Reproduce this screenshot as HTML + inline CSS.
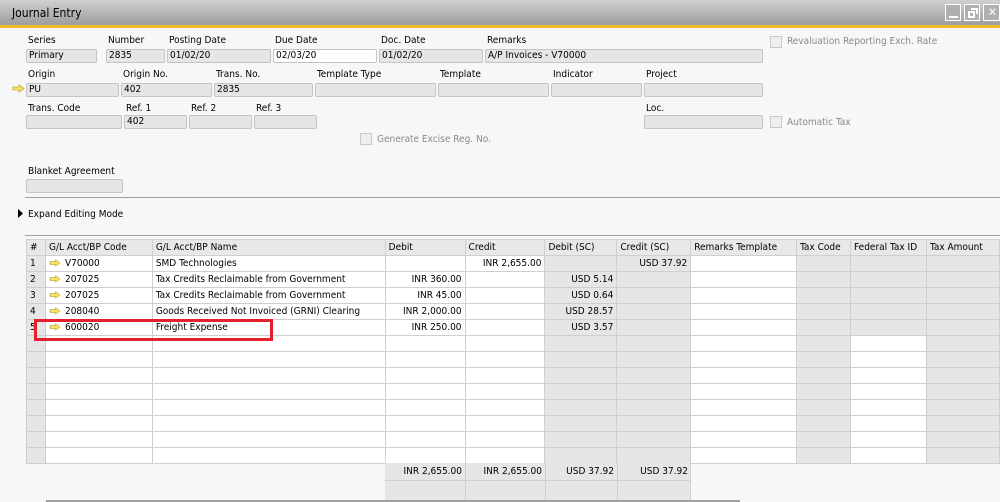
<!DOCTYPE html>
<html><head><style>
*{margin:0;padding:0;box-sizing:border-box}
body{width:1000px;height:502px;overflow:hidden;background:#f7f7f7;font-family:Tahoma,"DejaVu Sans Condensed","Liberation Sans",sans-serif;font-size:10px;color:#000;position:relative}
.a{position:absolute;white-space:nowrap}
.f{position:absolute;height:14px;background:#e6e6e6;border:1px solid #c4c4c4;border-radius:2px;padding-left:2px;line-height:12px;font-size:10px}
.l{position:absolute;font-size:10px;white-space:nowrap}
.cb{position:absolute;width:12px;height:12px;border:1px solid #c8c8c8;background:#eee}
.g{color:#8a8a8a}
table{position:absolute;left:26px;top:239px;border-collapse:collapse;font-size:10px}
td{border:1px solid #cfcfcf;height:16px;padding:0 3px;white-space:nowrap;background:#fff}
td.s{background:#e6e6e6}
td.r{text-align:right}
tr.h td{background:#e8e8e8}
.ar{display:inline-block;width:12px;height:8px;vertical-align:middle;margin-right:4px}
</style></head><body>
<div class="a" style="left:0;top:0;width:1000px;height:25px;background:linear-gradient(#d0d0d0,#9d9d9d)"></div>
<div class="a" style="left:0;top:25px;width:1000px;height:3px;background:#f0b82a"></div>
<div class="a" style="left:12px;top:6px;font-size:12px">Journal Entry</div>
<div class="a" style="left:945px;top:4px;width:16px;height:17px;border:1px solid #fff;background:#b0b0b0"><div style="position:absolute;left:3px;top:11px;width:9px;height:2px;background:#fff"></div></div>
<div class="a" style="left:964px;top:4px;width:16px;height:17px;border:1px solid #fff;background:#b0b0b0"><div style="position:absolute;left:3px;top:6px;width:7px;height:7px;border:2px solid #fff"></div><div style="position:absolute;left:6px;top:3px;width:7px;height:6px;border-top:2px solid #fff;border-right:2px solid #fff"></div></div>
<div class="a" style="left:983px;top:4px;width:17px;height:17px;border:1px solid #fff;background:#b0b0b0;color:#fff;font-weight:bold;font-size:12px;padding-left:4px">✕</div>

<div class="l" style="left:28px;top:35px">Series</div>
<div class="l" style="left:108px;top:35px">Number</div>
<div class="l" style="left:169px;top:35px">Posting Date</div>
<div class="l" style="left:275px;top:35px">Due Date</div>
<div class="l" style="left:381px;top:35px">Doc. Date</div>
<div class="l" style="left:487px;top:35px">Remarks</div>
<div class="f" style="left:26px;top:49px;width:71px">Primary</div>
<div class="f" style="left:106px;top:49px;width:59px">2835</div>
<div class="f" style="left:167px;top:49px;width:104px">01/02/20</div>
<div class="f" style="left:273px;top:49px;width:104px;background:#fff">02/03/20</div>
<div class="f" style="left:379px;top:49px;width:104px">01/02/20</div>
<div class="f" style="left:485px;top:49px;width:278px">A/P Invoices - V70000</div>
<div class="cb" style="left:770px;top:36px"></div>
<div class="l g" style="left:787px;top:36px">Revaluation Reporting Exch. Rate</div>

<div class="l" style="left:28px;top:69px">Origin</div>
<div class="l" style="left:123px;top:69px">Origin No.</div>
<div class="l" style="left:216px;top:69px">Trans. No.</div>
<div class="l" style="left:317px;top:69px">Template Type</div>
<div class="l" style="left:440px;top:69px">Template</div>
<div class="l" style="left:553px;top:69px">Indicator</div>
<div class="l" style="left:646px;top:69px">Project</div>
<svg class="a" style="left:12px;top:84px" width="13" height="9"><path d="M1 3h6V1l5 3.5-5 3.5V6H1z" fill="#f6e36a" stroke="#c9a92a" stroke-width="0.8"/></svg>
<div class="f" style="left:26px;top:83px;width:93px">PU</div>
<div class="f" style="left:121px;top:83px;width:91px">402</div>
<div class="f" style="left:214px;top:83px;width:99px">2835</div>
<div class="f" style="left:315px;top:83px;width:121px"></div>
<div class="f" style="left:438px;top:83px;width:111px"></div>
<div class="f" style="left:551px;top:83px;width:91px"></div>
<div class="f" style="left:644px;top:83px;width:119px"></div>

<div class="l" style="left:28px;top:103px">Trans. Code</div>
<div class="l" style="left:126px;top:103px">Ref. 1</div>
<div class="l" style="left:191px;top:103px">Ref. 2</div>
<div class="l" style="left:256px;top:103px">Ref. 3</div>
<div class="l" style="left:646px;top:103px">Loc.</div>
<div class="f" style="left:26px;top:115px;width:96px"></div>
<div class="f" style="left:124px;top:115px;width:63px">402</div>
<div class="f" style="left:189px;top:115px;width:63px"></div>
<div class="f" style="left:254px;top:115px;width:63px"></div>
<div class="f" style="left:644px;top:115px;width:119px"></div>
<div class="cb" style="left:770px;top:116px"></div>
<div class="l g" style="left:787px;top:117px">Automatic Tax</div>
<div class="cb" style="left:360px;top:133px"></div>
<div class="l g" style="left:377px;top:134px">Generate Excise Reg. No.</div>

<div class="l" style="left:28px;top:166px">Blanket Agreement</div>
<div class="f" style="left:26px;top:179px;width:97px"></div>
<div class="a" style="left:25px;top:197px;width:975px;height:1px;background:#a0a0a0"></div>
<svg class="a" style="left:18px;top:209px" width="6" height="9"><path d="M0 0l5 4.5L0 9z" fill="#000"/></svg>
<div class="l" style="left:28px;top:209px">Expand Editing Mode</div>
<div class="a" style="left:25px;top:235px;width:975px;height:1px;background:#a0a0a0"></div>

<table>
<colgroup><col style="width:19px"><col style="width:107px"><col style="width:233px"><col style="width:80px"><col style="width:80px"><col style="width:72px"><col style="width:74px"><col style="width:106px"><col style="width:54px"><col style="width:76px"><col style="width:73px"></colgroup>
<tr class="h"><td>#</td><td>G/L Acct/BP Code</td><td>G/L Acct/BP Name</td><td>Debit</td><td>Credit</td><td>Debit (SC)</td><td>Credit (SC)</td><td>Remarks Template</td><td>Tax Code</td><td>Federal Tax ID</td><td>Tax Amount</td></tr>
<tr><td class="s">1</td><td><svg class="ar" viewBox="0 0 13 9"><path d="M1 3h6V1l5 3.5-5 3.5V6H1z" fill="#f6e36a" stroke="#c9a92a" stroke-width="0.8"/></svg>V70000</td><td>SMD Technologies</td><td></td><td class="r">INR 2,655.00</td><td class="s"></td><td class="s r">USD 37.92</td><td></td><td class="s"></td><td class="s"></td><td class="s"></td></tr>
<tr><td class="s">2</td><td><svg class="ar" viewBox="0 0 13 9"><path d="M1 3h6V1l5 3.5-5 3.5V6H1z" fill="#f6e36a" stroke="#c9a92a" stroke-width="0.8"/></svg>207025</td><td>Tax Credits Reclaimable from Government</td><td class="r">INR 360.00</td><td></td><td class="s r">USD 5.14</td><td class="s"></td><td></td><td class="s"></td><td class="s"></td><td class="s"></td></tr>
<tr><td class="s">3</td><td><svg class="ar" viewBox="0 0 13 9"><path d="M1 3h6V1l5 3.5-5 3.5V6H1z" fill="#f6e36a" stroke="#c9a92a" stroke-width="0.8"/></svg>207025</td><td>Tax Credits Reclaimable from Government</td><td class="r">INR 45.00</td><td></td><td class="s r">USD 0.64</td><td class="s"></td><td></td><td class="s"></td><td class="s"></td><td class="s"></td></tr>
<tr><td class="s">4</td><td><svg class="ar" viewBox="0 0 13 9"><path d="M1 3h6V1l5 3.5-5 3.5V6H1z" fill="#f6e36a" stroke="#c9a92a" stroke-width="0.8"/></svg>208040</td><td>Goods Received Not Invoiced (GRNI) Clearing</td><td class="r">INR 2,000.00</td><td></td><td class="s r">USD 28.57</td><td class="s"></td><td></td><td class="s"></td><td class="s"></td><td class="s"></td></tr>
<tr><td class="s">5</td><td><svg class="ar" viewBox="0 0 13 9"><path d="M1 3h6V1l5 3.5-5 3.5V6H1z" fill="#f6e36a" stroke="#c9a92a" stroke-width="0.8"/></svg>600020</td><td>Freight Expense</td><td class="r">INR 250.00</td><td></td><td class="s r">USD 3.57</td><td class="s"></td><td></td><td class="s"></td><td class="s"></td><td class="s"></td></tr>
<tr><td class="s"></td><td></td><td></td><td></td><td></td><td class="s"></td><td class="s"></td><td></td><td class="s"></td><td></td><td class="s"></td></tr>
<tr><td class="s"></td><td></td><td></td><td></td><td></td><td class="s"></td><td class="s"></td><td></td><td class="s"></td><td></td><td class="s"></td></tr>
<tr><td class="s"></td><td></td><td></td><td></td><td></td><td class="s"></td><td class="s"></td><td></td><td class="s"></td><td></td><td class="s"></td></tr>
<tr><td class="s"></td><td></td><td></td><td></td><td></td><td class="s"></td><td class="s"></td><td></td><td class="s"></td><td></td><td class="s"></td></tr>
<tr><td class="s"></td><td></td><td></td><td></td><td></td><td class="s"></td><td class="s"></td><td></td><td class="s"></td><td></td><td class="s"></td></tr>
<tr><td class="s"></td><td></td><td></td><td></td><td></td><td class="s"></td><td class="s"></td><td></td><td class="s"></td><td></td><td class="s"></td></tr>
<tr><td class="s"></td><td></td><td></td><td></td><td></td><td class="s"></td><td class="s"></td><td></td><td class="s"></td><td></td><td class="s"></td></tr>
<tr><td class="s"></td><td></td><td></td><td></td><td></td><td class="s"></td><td class="s"></td><td></td><td class="s"></td><td></td><td class="s"></td></tr>
</table>
<div class="a" style="left:34px;top:319px;width:239px;height:22px;border:3px solid #e3202b"></div>

<div class="a" style="left:385px;top:463px;width:306px;height:38px;background:#e6e6e6"></div>
<div class="a" style="left:385px;top:480px;width:306px;height:1px;background:#cfcfcf"></div>
<div class="a" style="left:465px;top:463px;width:1px;height:38px;background:#cfcfcf"></div>
<div class="a" style="left:545px;top:463px;width:1px;height:38px;background:#cfcfcf"></div>
<div class="a" style="left:617px;top:463px;width:1px;height:38px;background:#cfcfcf"></div>
<div class="a" style="left:690px;top:463px;width:1px;height:38px;background:#cfcfcf"></div>
<div class="a r" style="left:388px;top:466px;width:74px;text-align:right">INR 2,655.00</div>
<div class="a" style="left:468px;top:466px;width:74px;text-align:right">INR 2,655.00</div>
<div class="a" style="left:548px;top:466px;width:66px;text-align:right">USD 37.92</div>
<div class="a" style="left:620px;top:466px;width:68px;text-align:right">USD 37.92</div>
<div class="a" style="left:46px;top:500px;width:694px;height:2px;background:#a0a0a0"></div>
</body></html>
